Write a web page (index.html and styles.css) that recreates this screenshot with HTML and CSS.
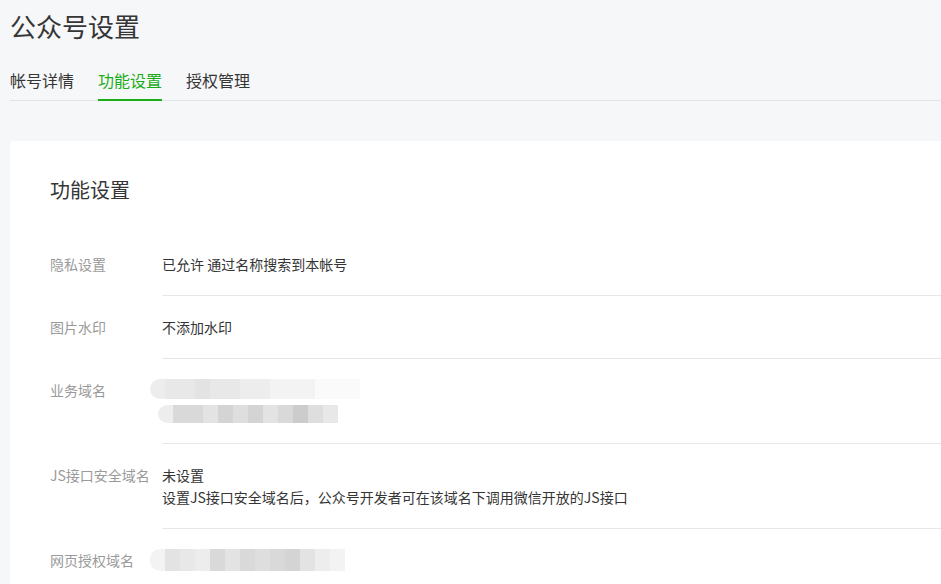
FILE: index.html
```html
<!DOCTYPE html>
<html lang="zh-CN">
<head>
  <meta charset="UTF-8" />
  <title>公众号设置</title>
  <link rel="stylesheet" href="styles.css">
</head>
<body>
  <div class="page">
    <h1 class="page-title">公众号设置</h1>

    <div class="tabs">
      <a class="tab">帐号详情</a>
      <a class="tab active">功能设置</a>
      <a class="tab">授权管理</a>
    </div>

    <div class="card">
      <h2 class="card-title">功能设置</h2>

      <div class="row">
        <div class="row-label">隐私设置</div>
        <div class="row-value">已允许 通过名称搜索到本帐号</div>
      </div>

      <div class="row">
        <div class="row-label">图片水印</div>
        <div class="row-value">不添加水印</div>
      </div>

      <div class="row">
        <div class="row-label">业务域名</div>
        <div class="row-value">
          <div class="blur blur-a">
            <span class="c2 cap"></span><span class="c3"></span><span class="c3"></span><span class="c4"></span><span class="c3"></span><span class="c3"></span><span class="c2"></span><span class="c2"></span><span class="c1"></span><span class="c1"></span><span class="c1"></span><span class="c0"></span><span class="c0"></span><span class="c0"></span>
          </div>
          <div class="blur blur-b">
            <span class="c2 cap"></span><span class="c6"></span><span class="c6"></span><span class="c4"></span><span class="c7"></span><span class="c5"></span><span class="c7"></span><span class="c4"></span><span class="c6"></span><span class="c8"></span><span class="c5"></span><span class="c3"></span>
          </div>
        </div>
      </div>

      <div class="row">
        <div class="row-label">JS接口安全域名</div>
        <div class="row-value">
          <div>未设置</div>
          <div>设置JS接口安全域名后，公众号开发者可在该域名下调用微信开放的JS接口</div>
        </div>
      </div>

      <div class="row">
        <div class="row-label">网页授权域名</div>
        <div class="row-value">
          <div class="blur blur-c">
            <span class="c1 cap"></span><span class="c4"></span><span class="c3"></span><span class="c2"></span><span class="c6"></span><span class="c4"></span><span class="c6"></span><span class="c5"></span><span class="c6"></span><span class="c7"></span><span class="c4"></span><span class="c2"></span><span class="c1"></span>
          </div>
        </div>
      </div>
    </div>
  </div>
</body>
</html>
```

FILE: styles.css
```css
* {
  margin: 0;
  padding: 0;
  box-sizing: border-box;
}

body {
  font-family: "Noto Sans CJK SC", "Noto Sans", sans-serif;
  background: #f6f7f9;
  color: #353535;
  overflow: hidden;
}

.page {
  padding: 8px 0 0 10px;
}

.page-title {
  font-size: 26px;
  font-weight: 400;
  line-height: 36px;
  color: #353535;
}

.tabs {
  display: flex;
  margin-top: 24px;
  border-bottom: 1px solid #e0e3e7;
}

.tab {
  font-size: 16px;
  line-height: 24px;
  padding-bottom: 8px;
  margin-right: 24px;
  color: #353535;
  cursor: pointer;
}

.tab.active {
  color: #1aad19;
  border-bottom: 2px solid #1aad19;
  margin-bottom: -1px;
  padding-bottom: 7px;
}

.card {
  margin-top: 40px;
  background: #fff;
  border-radius: 4px 0 0 0;
  padding: 35px 0 40px 40px;
  min-height: 500px;
}

.card-title {
  font-size: 20px;
  font-weight: 400;
  line-height: 28px;
  margin-bottom: 29px;
  color: #353535;
}

.row {
  display: flex;
  font-size: 14px;
  line-height: 22px;
}

.row-label {
  width: 112px;
  flex-shrink: 0;
  padding: 20px 0;
  color: #9a9a9a;
}

.row-value {
  flex: 1;
  padding: 20px 0;
  border-bottom: 1px solid #e7e7eb;
  color: #353535;
}

/* pixelated, blurred-out values */
.blur {
  display: flex;
}

.blur span {
  width: 15px;
  height: 100%;
}

.blur .cap {
  border-radius: 10px 0 0 10px;
}

.blur-a {
  height: 20px;
  margin-left: -12px;
}

.blur-b {
  height: 18px;
  margin-top: 6px;
  margin-left: -4px;
}

.blur-c {
  height: 22px;
  margin-left: -12px;
}

.c0 { background: #fafafa; }
.c1 { background: #f3f3f3; }
.c2 { background: #ededed; }
.c3 { background: #e8e8e8; }
.c4 { background: #e3e3e3; }
.c5 { background: #dedede; }
.c6 { background: #d9d9d9; }
.c7 { background: #d4d4d4; }
.c8 { background: #cccccc; }
```
